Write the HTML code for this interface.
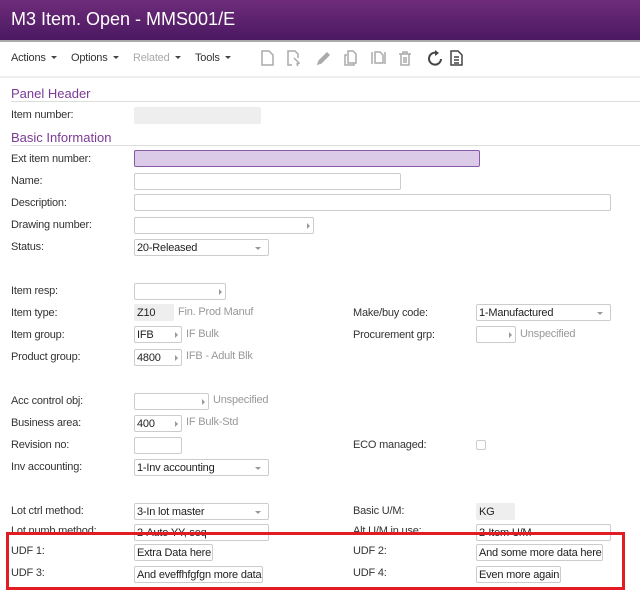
<!DOCTYPE html>
<html><head><meta charset="utf-8"><style>
*{margin:0;padding:0;box-sizing:border-box}
body{width:640px;height:591px;background:#fff;font-family:"Liberation Sans",sans-serif;font-size:11px;color:#333;position:relative;overflow:hidden;letter-spacing:-0.2px}
.a{position:absolute;white-space:nowrap}
.hdr{position:absolute;left:0;top:0;width:640px;height:42px;background:linear-gradient(#6e2c7a,#4b1862);border-bottom:2px solid #aaa}
.title{position:absolute;left:11px;top:9px;color:#fff;font-size:18px;letter-spacing:0}
.l,.r,.g,.in,.tb,.sec{white-space:nowrap}
.l{position:absolute;left:11px;font-size:11px;color:#333}
.r{position:absolute;left:353px;font-size:11px;color:#333}
.in{position:absolute;height:17px;border:1px solid #ccc;border-radius:2px;background:#fff;padding:0 2px;font-size:11px;color:#222;line-height:16px;overflow:hidden}
.ro{background:#eee;border-color:#eee}
.dd:after{content:"";position:absolute;right:7px;top:7px;border:3px solid transparent;border-top:3px solid #999}
.ar:after{content:"";position:absolute;right:3px;top:5px;border:3px solid transparent;border-left:3px solid #999;border-right:0}
.g{position:absolute;color:#999;font-size:11px}
.sec{position:absolute;left:11px;color:#7b3a96;font-size:13px;letter-spacing:0}
.line{position:absolute;left:11px;width:629px;height:1px;background:#ddd}
.tb{position:absolute;top:52px;font-size:11px;color:#333}
.tb:after{content:"";display:inline-block;margin-left:5px;vertical-align:2px;border:3px solid transparent;border-top:3px solid #444;border-bottom:0}
</style></head><body>
<div class="hdr"><div class="title">M3 Item. Open - MMS001/E</div></div>
<div class="tb" style="left:11px">Actions</div>
<div class="tb" style="left:71px">Options</div>
<div class="tb" style="left:133px;color:#aaa">Related</div>
<div class="tb" style="left:195px">Tools</div>
<svg class="a" style="left:260px;top:49px" width="210" height="18" viewBox="0 0 210 18" fill="none" stroke-width="1.5">
<path d="M2 2h7l4 4v10H2z" stroke="#aaa"/>
<path d="M32 16h-4V2h7l3 3v4M34 9l5 5-2 1 1 2" stroke="#aaa"/>
<path d="M58 15l1-3 8-8 2 2-8 8z" fill="#aaa" stroke="#aaa"/>
<path d="M87 6h-2v10h9v-2M88 2h5l3 3v9h-8z" stroke="#aaa"/>
<path d="M112 3v12M125 3v12M115 3h5l3 3v8h-8z" stroke="#aaa"/>
<path d="M139 5h12M143 5V3h4v2M141 5v11h8V5M144 8v6M146 8v6" stroke="#aaa"/>
<path d="M177 4a6 6 0 1 0 4 6" stroke="#444" stroke-width="2"/><path d="M175 1l4 3-4 3z" fill="#444" stroke="none"/>
<path d="M191 2h7l4 4v10h-11zM194 8h5M194 11h5M194 14h5" stroke="#444"/>
</svg>
<div class="line" style="left:0;width:640px;top:76px;height:2px;background:#eee"></div>
<div class="sec" style="top:86px">Panel Header</div>
<div class="line" style="top:101px"></div>
<div class="l" style="top:109px">Item number:</div>
<div class="in ro" style="left:134px;top:107px;width:127px"></div>
<div class="sec" style="top:130px">Basic Information</div>
<div class="line" style="top:145px"></div>

<div class="l" style="top:153px">Ext item number:</div>
<div class="in" style="left:134px;top:150px;width:346px;background:#dccbe8;border-color:#8b5aa6"></div>
<div class="l" style="top:175px">Name:</div>
<div class="in" style="left:134px;top:173px;width:267px"></div>
<div class="l" style="top:197px">Description:</div>
<div class="in" style="left:134px;top:194px;width:477px"></div>
<div class="l" style="top:219px">Drawing number:</div>
<div class="in ar" style="left:134px;top:217px;width:180px"></div>
<div class="l" style="top:241px">Status:</div>
<div class="in dd" style="left:134px;top:239px;width:135px">20-Released</div>

<div class="l" style="top:285px">Item resp:</div>
<div class="in ar" style="left:134px;top:283px;width:92px"></div>
<div class="l" style="top:307px">Item type:</div>
<div class="in ro" style="left:134px;top:304px;width:40px">Z10</div>
<div class="g" style="left:178px;top:306px">Fin. Prod Manuf</div>
<div class="r" style="top:307px">Make/buy code:</div>
<div class="in dd" style="left:476px;top:304px;width:135px">1-Manufactured</div>
<div class="l" style="top:329px">Item group:</div>
<div class="in ar" style="left:134px;top:326px;width:48px">IFB</div>
<div class="g" style="left:186px;top:328px">IF Bulk</div>
<div class="r" style="top:329px">Procurement grp:</div>
<div class="in ar" style="left:476px;top:326px;width:40px"></div>
<div class="g" style="left:520px;top:328px">Unspecified</div>
<div class="l" style="top:351px">Product group:</div>
<div class="in ar" style="left:134px;top:349px;width:48px">4800</div>
<div class="g" style="left:186px;top:350px">IFB - Adult Blk</div>

<div class="l" style="top:395px">Acc control obj:</div>
<div class="in ar" style="left:134px;top:393px;width:75px"></div>
<div class="g" style="left:213px;top:394px">Unspecified</div>
<div class="l" style="top:417px">Business area:</div>
<div class="in ar" style="left:134px;top:415px;width:48px">400</div>
<div class="g" style="left:186px;top:416px">IF Bulk-Std</div>
<div class="l" style="top:439px">Revision no:</div>
<div class="in" style="left:134px;top:437px;width:48px"></div>
<div class="r" style="top:439px">ECO managed:</div>
<div class="in" style="left:476px;top:440px;width:10px;height:10px;padding:0"></div>
<div class="l" style="top:461px">Inv accounting:</div>
<div class="in dd" style="left:134px;top:459px;width:135px">1-Inv accounting</div>

<div class="l" style="top:505px">Lot ctrl method:</div>
<div class="in dd" style="left:134px;top:503px;width:135px">3-In lot master</div>
<div class="r" style="top:505px">Basic U/M:</div>
<div class="in ro" style="left:476px;top:503px;width:39px">KG</div>
<div class="l" style="top:525px">Lot numb method:</div>
<div class="in" style="left:134px;top:524px;width:135px">2-Auto YY, seq</div>
<div class="r" style="top:525px">Alt U/M in use:</div>
<div class="in" style="left:476px;top:524px;width:135px">2-Item U/M</div>
<div class="l" style="top:545px;background:#fff;width:120px">UDF 1:</div>
<div class="in" style="left:134px;top:544px;width:79px;background:#fff">Extra Data here</div>
<div class="r" style="top:545px;background:#fff;width:120px">UDF 2:</div>
<div class="in" style="left:476px;top:544px;width:127px;background:#fff">And some more data here</div>
<div class="l" style="top:567px">UDF 3:</div>
<div class="in" style="left:134px;top:566px;width:129px">And eveffhfgfgn more data</div>
<div class="r" style="top:567px">UDF 4:</div>
<div class="in" style="left:476px;top:566px;width:85px">Even more again</div>
<div class="a" style="left:6px;top:532px;width:619px;height:58px;border:3px solid #e31b23;background:transparent"></div>
</body></html>
